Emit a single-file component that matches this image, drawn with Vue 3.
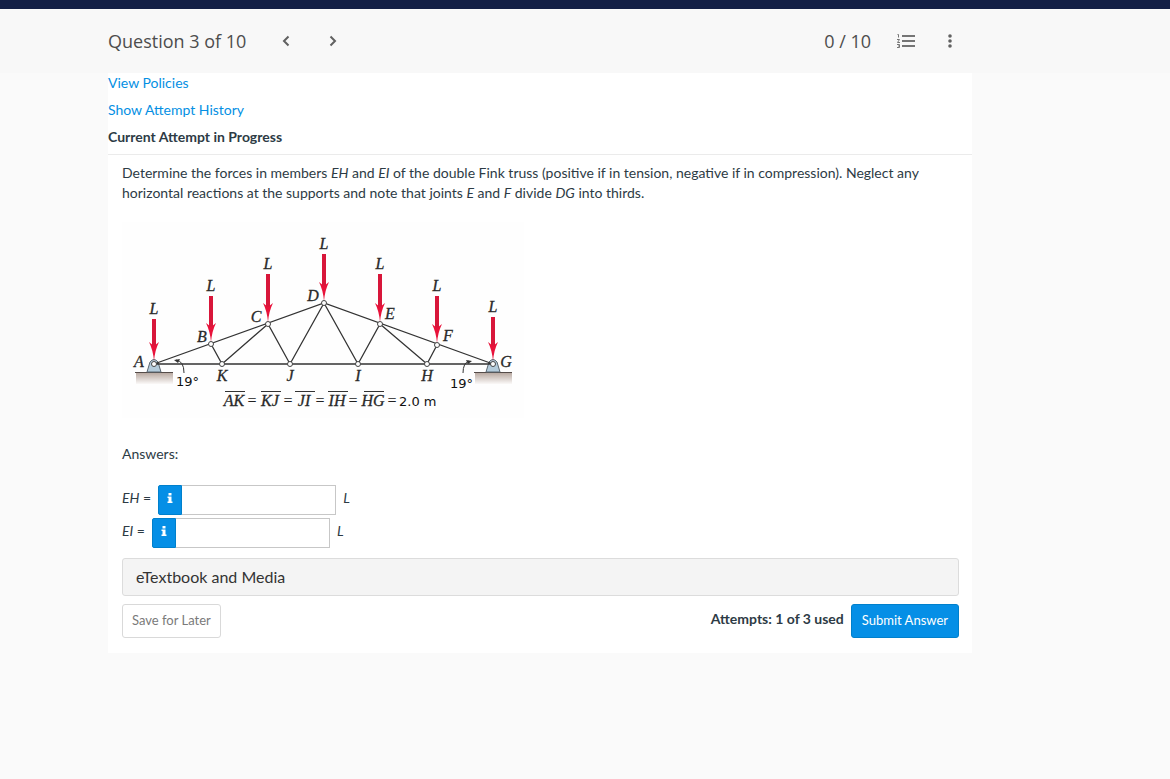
<script setup>
import { ref } from 'vue'

const answers = ref([
  { id: 'eh', name: 'EH', value: '' },
  { id: 'ei', name: 'EI', value: '' },
])

const members = [
  'M32 142 L202 81 L371 142 Z',
  'M89 122 L100 142 L146 102 L168 142 L202 81 L236 142 L258 102 L305 142 L315 123',
]

const joints = [
  { name: 'A', x: 32, y: 142, lx: 17, ly: 145 },
  { name: 'B', x: 89, y: 122, lx: 80, ly: 120 },
  { name: 'C', x: 146, y: 102, lx: 134, ly: 100 },
  { name: 'D', x: 202, y: 81, lx: 191, ly: 79 },
  { name: 'E', x: 258, y: 102, lx: 268, ly: 97 },
  { name: 'F', x: 315, y: 123, lx: 326, ly: 119 },
  { name: 'G', x: 371, y: 142, lx: 384, ly: 145 },
  { name: 'H', x: 305, y: 142, lx: 305, ly: 159 },
  { name: 'I', x: 236, y: 142, lx: 236, ly: 159 },
  { name: 'J', x: 168, y: 142, lx: 168, ly: 159 },
  { name: 'K', x: 100, y: 142, lx: 100, ly: 159 },
]

const loads = [
  { x: 32, top: 97, tip: 139 },
  { x: 89, top: 74, tip: 120 },
  { x: 146, top: 52, tip: 100 },
  { x: 202, top: 32, tip: 79 },
  { x: 258, top: 52, tip: 100 },
  { x: 315, top: 74, tip: 121 },
  { x: 371, top: 95, tip: 139 },
]

const arrowHead = (x, y) =>
  `M${x} ${y} Q${x - 1} ${y - 11} ${x - 5} ${y - 19} L${x} ${y - 15} L${x + 5} ${y - 19} Q${x + 1} ${y - 11} ${x} ${y} Z`

const spans = [
  { name: 'AK', x: 112 },
  { name: 'KJ', x: 148 },
  { name: 'JI', x: 182 },
  { name: 'IH', x: 215 },
  { name: 'HG', x: 251 },
]
const equals = [130, 166, 198, 231, 270]
</script>

<template>
  <div class="page">
    <header class="topbar">
      <h1 class="title">Question 3 of 10</h1>
      <button class="icon-btn prev" type="button" aria-label="Previous question">
        <svg width="10" height="12" viewBox="0 0 10 12"><path d="M7.500 1.500 L3 6 L7.500 10.500" /></svg>
      </button>
      <button class="icon-btn next" type="button" aria-label="Next question">
        <svg width="10" height="12" viewBox="0 0 10 12"><path d="M2.500 1.500 L7 6 L2.500 10.500" /></svg>
      </button>
      <span class="score">0 / 10</span>
      <button class="icon-btn list" type="button" aria-label="Question list">
        <svg width="18" height="16" viewBox="0 0 18 16">
          <path class="rule" d="M5 3 H18 M5 8 H18 M5 13 H18" />
          <path class="digit" d="M0.500 1.500 H1.500 V4.500 M0 6.500 H2.500 L0.500 9.500 H3 M0 11.500 H2.500 V14.500 H0 M1 13 H2.500" />
        </svg>
      </button>
      <button class="icon-btn more" type="button" aria-label="More options">
        <svg width="6" height="16" viewBox="0 0 6 16">
          <circle cx="3" cy="3" r="1.8" /><circle cx="3" cy="8" r="1.8" /><circle cx="3" cy="13" r="1.8" />
        </svg>
      </button>
    </header>

    <main class="card">
      <div class="intro">
        <a href="#policies">View Policies</a>
        <a href="#history">Show Attempt History</a>
        <strong>Current Attempt in Progress</strong>
      </div>

      <form class="question" @submit.prevent>
        <p class="prompt">
          Determine the forces in members <em>EH</em> and <em>EI</em> of the double Fink truss (positive if in tension,
          negative if in compression). Neglect any horizontal reactions at the supports and note that joints
          <em>E</em> and <em>F</em> divide <em>DG</em> into thirds.
        </p>

        <svg class="truss" width="402" height="196" viewBox="0 0 402 196" role="img" aria-label="Double Fink truss">
          <defs>
            <linearGradient id="ground" x1="0" y1="0" x2="0" y2="1">
              <stop offset="0" stop-color="#b9aaa2" />
              <stop offset="1" stop-color="#fbf9f8" />
            </linearGradient>
          </defs>
          <rect width="402" height="196" fill="#fefefe" />
          <g v-for="x in [32, 371]" :key="x">
            <rect :x="x - 18" y="151" width="37" height="11" fill="url(#ground)" />
            <path :d="`M${x - 19} 150.500 h38`" stroke="#554c49" />
            <path :d="`M${x - 7} 150 L${x - 4} 140 Q${x} 135 ${x + 4} 140 L${x + 7} 150 Z`" fill="#b4ccdc" stroke="#5a6670" />
          </g>
          <path v-for="d in members" :key="d" :d="d" class="member" />
          <g v-for="l in loads" :key="l.x">
            <rect :x="l.x - 2" :y="l.top" width="4" :height="l.tip - l.top - 12" fill="#d8163a" />
            <path :d="arrowHead(l.x, l.tip)" fill="#e8123a" />
            <text :x="l.x" :y="l.top - 5" class="var">L</text>
          </g>
          <g v-for="j in joints" :key="j.name">
            <circle :cx="j.x" :cy="j.y" r="2.5" class="joint" />
            <text :x="j.lx" :y="j.ly" class="var">{{ j.name }}</text>
          </g>
          <path class="arc" d="M54 138 Q62 139 62 151" />
          <path class="arc-tip" d="M52 138 L58 137 L56 141 Z" />
          <path class="arc" d="M341 151 Q341 141 347 139" />
          <path class="arc-tip" d="M350 139 L344 138 L346 142 Z" />
          <text x="54" y="164" class="num">19°</text>
          <text x="328" y="166" class="num">19°</text>
          <g v-for="s in spans" :key="s.name">
            <path :d="`M${s.x - 9} 169.500 h20`" stroke="#333" />
            <text :x="s.x" y="184" class="var">{{ s.name }}</text>
          </g>
          <text v-for="x in equals" :key="x" :x="x" y="184" class="eq">=</text>
          <text x="277" y="184" class="num">2.0 m</text>
        </svg>

        <p class="answers-title">Answers:</p>

        <div v-for="a in answers" :key="a.id" class="answer">
          <label :for="a.id"><em>{{ a.name }}</em> =</label>
          <div class="field">
            <button type="button" class="info" :aria-label="`Information about ${a.name}`">
              <svg width="6" height="10" viewBox="0 0 6 10">
                <path d="M1.500 0 H4.500 V2.500 H1.500 Z M0.500 3.500 H4.500 V8.500 H5.500 V10 H0.500 V8.500 H1.500 V5 H0.500 Z" />
              </svg>
            </button>
            <input :id="a.id" v-model="a.value" type="text" />
          </div>
          <em>L</em>
        </div>

        <button type="button" class="textbook">eTextbook and Media</button>

        <div class="actions">
          <button type="button" class="btn save">Save for Later</button>
          <strong class="attempts">Attempts: 1 of 3 used</strong>
          <button type="submit" class="btn submit">Submit Answer</button>
        </div>
      </form>
    </main>
  </div>
</template>

<style>
body {
  background: #fafafa;
}
</style>

<style scoped>
.page {
  border-top: 9px solid #131f45;
  font: 14px/20px Lato, sans-serif;
  color: #2d3b45;
}
.page * {
  box-sizing: border-box;
}
button {
  font: inherit;
  cursor: pointer;
}
.topbar {
  display: flex;
  align-items: center;
  height: 64px;
  padding: 0 214px 0 108px;
  background: #f8f8f8;
  color: #4d4d4d;
  font: 18px/24px "Open Sans", sans-serif;
}
.title {
  margin: 0;
  font: inherit;
}
.icon-btn {
  display: flex;
  justify-content: center;
  padding: 0;
  border: 0;
  background: none;
  fill: #616161;
}
.prev,
.next {
  width: 24px;
}
.prev {
  margin-left: 28px;
}
.next {
  margin-left: 23px;
}
.prev path,
.next path {
  fill: none;
  stroke: #616161;
  stroke-width: 2;
}
.score {
  margin-left: auto;
}
.list {
  width: 18px;
  margin-left: 26px;
}
.rule,
.digit {
  fill: none;
  stroke: #757575;
}
.rule {
  stroke-width: 2;
}
.more {
  width: 12px;
  margin-left: 29px;
}
.card {
  margin: 0 198px 0 108px;
  background: #fff;
}
.intro {
  display: flex;
  flex-direction: column;
  align-items: flex-start;
  gap: 7px;
  padding-bottom: 7px;
  border-bottom: 1px solid #ebebeb;
}
a {
  color: #058fe3;
  text-decoration: none;
}
.question {
  padding: 8px 13px 15px 14px;
}
.prompt {
  margin: 0 0 19px;
}
.truss {
  display: block;
  max-width: 100%;
}
.member {
  fill: none;
  stroke: #333;
  stroke-width: 1.3;
}
.joint {
  fill: #fff;
  stroke: #444;
}
.var {
  font: italic 16px "Liberation Serif", serif;
  text-anchor: middle;
  fill: #2a2a2a;
  stroke: #2a2a2a;
  stroke-width: 0.3;
}
.eq {
  font: 16px "Liberation Serif", serif;
  text-anchor: middle;
  fill: #222;
}
.num {
  font: 13px "DejaVu Sans", sans-serif;
  fill: #111;
}
.arc {
  fill: none;
  stroke: #333;
}
.arc-tip {
  fill: #333;
}
.answers-title {
  margin: 26px 0 21px;
}
.answer {
  display: flex;
  gap: 7px;
  margin-bottom: 3px;
  line-height: 26px;
}
.field {
  display: flex;
  width: 178px;
  height: 30px;
}
.info {
  display: flex;
  align-items: center;
  justify-content: center;
  flex: 0 0 24px;
  padding: 0 0 4px;
  border: 1px solid #0080cc;
  border-radius: 2px 0 0 2px;
  background: #058fe6;
  fill: #fff;
}
.field input {
  flex: 1;
  min-width: 0;
  padding: 0 6px;
  border: 1px solid #c7c7c7;
  border-left: 0;
  font: inherit;
}
.textbook {
  display: block;
  width: 100%;
  height: 38px;
  margin-top: 10px;
  padding: 0 13px;
  border: 1px solid #dcdcdc;
  border-radius: 3px;
  background: #f4f4f4;
  color: #333;
  font-size: 16px;
  text-align: left;
}
.actions {
  display: flex;
  margin-top: 8px;
}
.btn {
  height: 34px;
  padding: 0 10px 2px;
  border: 1px solid #d9d9d9;
  border-radius: 3px;
  background: #fff;
  color: #7a7a7a;
  font-size: 13px;
}
.save {
  padding: 0 9px 2px;
}
.attempts {
  margin: 5px 7px 0 auto;
}
.submit {
  border-color: #0080cc;
  background: #058fe6;
  color: #fff;
}
</style>
